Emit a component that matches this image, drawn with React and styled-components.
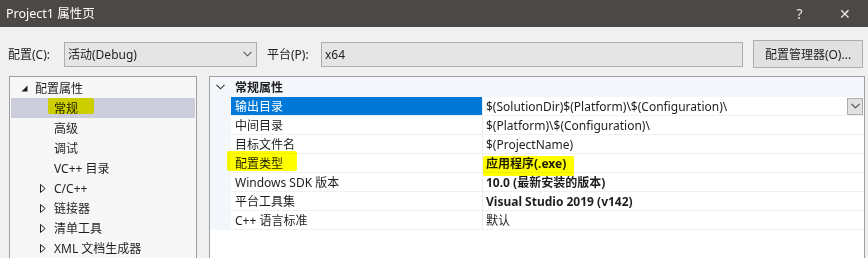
import React from "react";
import styled, { createGlobalStyle } from "styled-components";

const GlobalStyle = createGlobalStyle`
  html, body {
    margin: 0;
    padding: 0;
    background: #f0f0f0;
    overflow: hidden;
  }
  body {
    font-family: "Noto Sans", "Noto Sans CJK SC", sans-serif;
    font-size: 12px;
    color: #1e1e1e;
  }
`;

const Window = styled.div`
  width: 868px;
  height: 258px;
  display: flex;
  flex-direction: column;
  background: #f0f0f0;
`;

const TitleBar = styled.div`
  height: 27px;
  flex: none;
  background: #4b4845;
  color: #ffffff;
  display: flex;
  align-items: center;
  padding-left: 6px;
  padding-right: 1px;
  font-size: 12.5px;
`;

const Title = styled.div`
  flex: 1;
  padding-bottom: 2px;
`;

const TitleButton = styled.div`
  width: 45px;
  height: 27px;
  display: flex;
  align-items: center;
  justify-content: center;
  color: #e8e8e8;
  font-size: 14px;
`;

const Toolbar = styled.div`
  display: flex;
  align-items: center;
  height: 28px;
  margin-top: 13px;
  padding-left: 8px;
`;

const Label = styled.span`
  width: ${(p) => p.$w}px;
  flex: none;
`;

const Combo = styled.div`
  width: ${(p) => p.$w}px;
  height: 23px;
  flex: none;
  border: 1px solid #adadad;
  background: #e5e5e5;
  display: flex;
  align-items: center;
  padding-left: 3px;
  box-sizing: content-box;
  margin-right: ${(p) => p.$mr}px;
`;

const ComboText = styled.span`
  flex: 1;
`;

const ComboArrow = styled.span`
  width: 17px;
  display: flex;
  justify-content: center;
`;

const Button = styled.div`
  width: 108px;
  height: 26px;
  border: 1px solid #adadad;
  background: #e1e1e1;
  display: flex;
  align-items: center;
  justify-content: center;
  flex: none;
`;

const Main = styled.div`
  display: flex;
  gap: 12px;
  margin-top: 8px;
  padding-left: 9px;
  height: 200px;
`;

const TreePanel = styled.div`
  width: 184px;
  border: 1px solid #a0a0a0;
  background: #f7f7f7;
  padding: 1px;
`;

const TreeRow = styled.div`
  height: 20px;
  display: flex;
  align-items: center;
  padding-left: ${(p) => p.$indent}px;
  background: ${(p) => (p.$selected ? "#cccedb" : "transparent")};
`;

const TreeArrow = styled.span`
  width: 14px;
  flex: none;
  display: flex;
  align-items: center;
`;

const GridPanel = styled.div`
  width: 654px;
  border: 1px solid #a0a0a0;
  background: #ffffff;
`;

const GridRow = styled.div`
  display: grid;
  grid-template-columns: 21px 252px 1fr;
  height: ${(p) => (p.$header ? 20 : 19)}px;
  background: ${(p) => (p.$header ? "#f3f6fb" : "transparent")};
`;

const Gutter = styled.div`
  background: #f3f6fb;
  display: flex;
  align-items: center;
  justify-content: center;
`;

const HeaderText = styled.div`
  grid-column: 2 / 4;
  display: flex;
  align-items: center;
  padding-left: 4px;
  font-weight: 700;
`;

const NameCell = styled.div`
  display: flex;
  align-items: center;
  padding-left: 4px;
  border-right: 1px solid #ececec;
  border-bottom: 1px solid #f0f0f0;
  background: ${(p) => (p.$selected ? "#0078d7" : "transparent")};
  color: ${(p) => (p.$selected ? "#ffffff" : "#1e1e1e")};
  white-space: nowrap;
`;

const ValueCell = styled.div`
  display: flex;
  align-items: center;
  padding-left: 3px;
  border-bottom: 1px solid #f0f0f0;
  font-weight: ${(p) => (p.$bold ? 700 : 400)};
  white-space: nowrap;
`;

const ValueText = styled.span`
  flex: 1;
`;

const DropButton = styled.div`
  width: 14px;
  height: 15px;
  margin-right: 1px;
  border: 1px solid #adadad;
  background: #e1e1e1;
  display: flex;
  align-items: center;
  justify-content: center;
`;

// marker-pen highlight drawn over the text
const Mark = styled.span`
  position: relative;
  &::before {
    content: "";
    position: absolute;
    left: ${(p) => p.$l}px;
    right: ${(p) => p.$r}px;
    top: ${(p) => p.$t}px;
    bottom: ${(p) => p.$b}px;
    background: #ffff00;
    mix-blend-mode: multiply;
    border-radius: 2px;
  }
`;

const Chevron = ({ color = "#555" }) => (
  <svg width="9" height="6" viewBox="0 0 9 6">
    <path d="M0.5 0.8 L4.5 4.8 L8.5 0.8" fill="none" stroke={color} strokeWidth="1.1" />
  </svg>
);

const Expanded = () => (
  <svg width="7" height="7" viewBox="0 0 7 7">
    <path d="M6.5 0.5 L6.5 6.5 L0.5 6.5 Z" fill="#1e1e1e" />
  </svg>
);

const Collapsed = () => (
  <svg width="6" height="9" viewBox="0 0 6 9">
    <path d="M0.5 0.5 L5.2 4.5 L0.5 8.5 Z" fill="none" stroke="#1e1e1e" strokeWidth="1" />
  </svg>
);

const tree = [
  { text: "配置属性", indent: 10, arrow: "open" },
  { text: "常规", indent: 43, selected: true, mark: true },
  { text: "高级", indent: 43 },
  { text: "调试", indent: 43 },
  { text: "VC++ 目录", indent: 43 },
  { text: "C/C++", indent: 29, arrow: "closed" },
  { text: "链接器", indent: 29, arrow: "closed" },
  { text: "清单工具", indent: 29, arrow: "closed" },
  { text: "XML 文档生成器", indent: 29, arrow: "closed" },
];

const props = [
  { name: "输出目录", value: "$(SolutionDir)$(Platform)\\$(Configuration)\\", selected: true, drop: true },
  { name: "中间目录", value: "$(Platform)\\$(Configuration)\\" },
  { name: "目标文件名", value: "$(ProjectName)" },
  { name: "配置类型", value: "应用程序(.exe)", bold: true, mark: true },
  { name: "Windows SDK 版本", value: "10.0 (最新安装的版本)", bold: true },
  { name: "平台工具集", value: "Visual Studio 2019 (v142)", bold: true },
  { name: "C++ 语言标准", value: "默认" },
];

export default function App() {
  return (
    <Window>
      <GlobalStyle />
      <TitleBar>
        <Title>Project1 属性页</Title>
        <TitleButton>?</TitleButton>
        <TitleButton>✕</TitleButton>
      </TitleBar>

      <Toolbar>
        <Label $w={56}>配置(C):</Label>
        <Combo $w={188} $mr={10}>
          <ComboText>活动(Debug)</ComboText>
          <ComboArrow>
            <Chevron />
          </ComboArrow>
        </Combo>
        <Label $w={54}>平台(P):</Label>
        <Combo $w={417} $mr={10}>
          <ComboText>x64</ComboText>
        </Combo>
        <Button>配置管理器(O)...</Button>
      </Toolbar>

      <Main>
        <TreePanel>
          {tree.map((row) => (
            <TreeRow key={row.text} $indent={row.indent} $selected={row.selected}>
              {row.arrow && (
                <TreeArrow>{row.arrow === "open" ? <Expanded /> : <Collapsed />}</TreeArrow>
              )}
              {row.mark ? (
                <Mark $l={-6} $r={-16} $t={-1} $b={3}>
                  {row.text}
                </Mark>
              ) : (
                row.text
              )}
            </TreeRow>
          ))}
        </TreePanel>

        <GridPanel>
          <GridRow $header>
            <Gutter>
              <Chevron color="#333" />
            </Gutter>
            <HeaderText>常规属性</HeaderText>
          </GridRow>
          {props.map((p) => (
            <GridRow key={p.name}>
              <Gutter />
              <NameCell $selected={p.selected}>
                {p.mark ? (
                  <Mark $l={-8} $r={-14} $t={-3} $b={1}>
                    {p.name}
                  </Mark>
                ) : (
                  p.name
                )}
              </NameCell>
              <ValueCell $bold={p.bold}>
                <ValueText>
                  {p.mark ? (
                    <Mark $l={-3} $r={-8} $t={1} $b={-4}>
                      {p.value}
                    </Mark>
                  ) : (
                    p.value
                  )}
                </ValueText>
                {p.drop && (
                  <DropButton>
                    <Chevron color="#444" />
                  </DropButton>
                )}
              </ValueCell>
            </GridRow>
          ))}
        </GridPanel>
      </Main>
    </Window>
  );
}
